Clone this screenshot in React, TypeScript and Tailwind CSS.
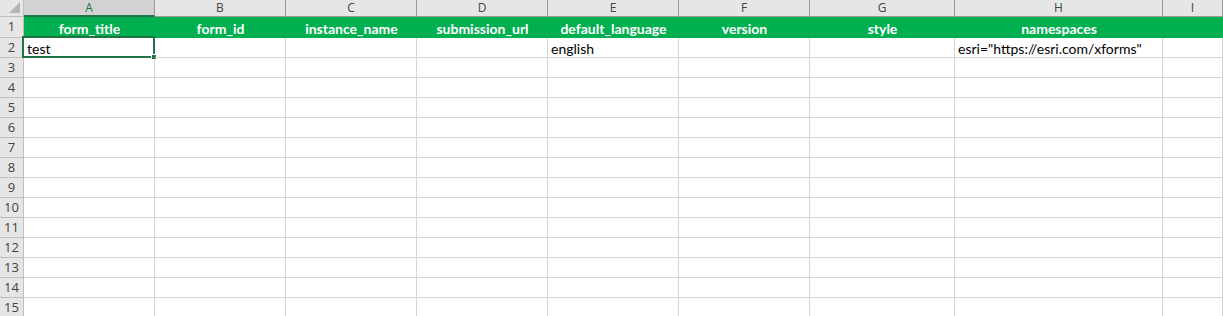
const cols = [
  { letter: "A", title: "form_title", w: "w-[131px]" },
  { letter: "B", title: "form_id", w: "w-[131px]" },
  { letter: "C", title: "instance_name", w: "w-[131px]" },
  { letter: "D", title: "submission_url", w: "w-[131px]" },
  { letter: "E", title: "default_language", w: "w-[131px]" },
  { letter: "F", title: "version", w: "w-[131px]" },
  { letter: "G", title: "style", w: "w-[145px]" },
  { letter: "H", title: "namespaces", w: "w-[208px]" },
  { letter: "I", title: "", w: "flex-1" },
];

const row2: Record<string, string> = {
  A: "test",
  E: "english",
  H: 'esri="https://esri.com/xforms"',
};

const rowNums = Array.from({ length: 13 }, (_, i) => i + 3);

function RowHead({ n }: { n: number }) {
  return (
    <div className="flex w-[24px] shrink-0 items-center justify-center border-b border-r border-[#bfbfbf] bg-[#e6e6e6] font-['Open_Sans'] text-[13px] text-[#444]">
      {n}
    </div>
  );
}

export default function App() {
  return (
    <div className="h-[316px] w-[1223px] overflow-hidden bg-white font-['Lato',sans-serif] text-[14px] text-black">
      {/* column letters */}
      <div className="flex h-[17px]">
        <div className="relative w-[24px] shrink-0 border-b border-r border-[#bfbfbf] bg-[#e6e6e6]">
          <div className="absolute bottom-[3px] right-[3px] h-0 w-0 border-b-[11px] border-l-[11px] border-b-[#b4b4b4] border-l-transparent" />
        </div>
        {cols.map((c) => (
          <div
            key={c.letter}
            className={`${c.w} flex shrink-0 items-center justify-center border-r font-['Open_Sans'] text-[12px] ${
              c.letter === "A"
                ? "border-b-2 border-b-[#217346] border-r-[#9b9b9b] bg-[#d2d2d2] text-[#217346]"
                : "border-b border-b-[#9b9b9b] border-r-[#9b9b9b] bg-[#e6e6e6] text-[#444]"
            }`}
          >
            {c.letter}
          </div>
        ))}
      </div>

      {/* row 1: green header */}
      <div className="flex h-[21px]">
        <RowHead n={1} />
        {cols.map((c) => (
          <div
            key={c.letter}
            className={`${c.w} flex shrink-0 items-center justify-center bg-[#00b050] pt-[1px] text-[14px] font-bold text-white`}
          >
            {c.title}
          </div>
        ))}
      </div>

      {/* row 2 */}
      <div className="flex h-[20px]">
        <RowHead n={2} />
        {cols.map((c) => (
          <div
            key={c.letter}
            className={`${c.w} relative flex shrink-0 items-center border-b border-r border-[#d4d4d4] px-[3px] pt-[1px]`}
          >
            {row2[c.letter] ?? ""}
            {c.letter === "A" && (
              <div className="pointer-events-none absolute left-[-2px] top-[-2px] h-[22px] w-[133px] border-2 border-[#217346]">
                <div className="absolute bottom-[-4px] right-[-4px] h-[6px] w-[6px] border border-white bg-[#217346]" />
              </div>
            )}
          </div>
        ))}
      </div>

      {rowNums.map((n) => (
        <div key={n} className="flex h-[20px]">
          <RowHead n={n} />
          {cols.map((c) => (
            <div key={c.letter} className={`${c.w} shrink-0 border-b border-r border-[#d4d4d4]`} />
          ))}
        </div>
      ))}
    </div>
  );
}
